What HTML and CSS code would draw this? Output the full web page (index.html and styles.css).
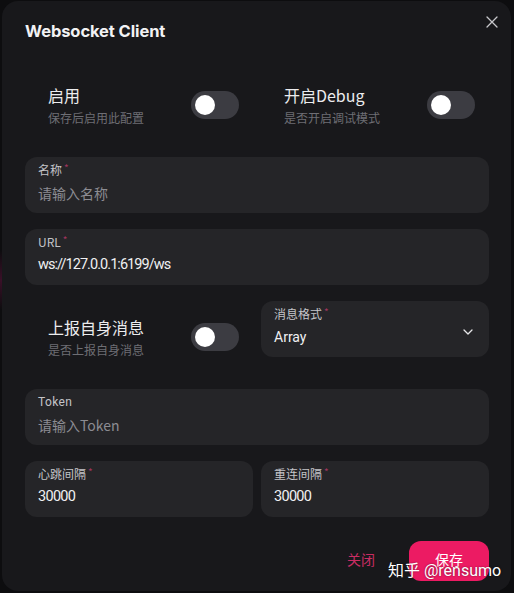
FILE: index.html
```html
<!DOCTYPE html>
<html lang="zh">
<head>
<meta charset="utf-8">
<title>Websocket Client</title>
<link rel="stylesheet" href="styles.css">
</head>
<body>
<div class="edge-glow"></div>
<div class="dialog">
  <div class="header">
    <div class="title">Websocket Client</div>
    <button class="close-x" aria-label="关闭">
      <svg width="12" height="12" viewBox="0 0 12 12"><path d="M1 1L11 11M11 1L1 11" stroke="#c8c8cc" stroke-width="1.3" stroke-linecap="round" fill="none"/></svg>
    </button>
  </div>

  <div class="form">
    <div class="switch-cell">
      <div class="switch-text">
        <div class="switch-title">启用</div>
        <div class="switch-sub">保存后启用此配置</div>
      </div>
      <div class="toggle"><span class="knob"></span></div>
    </div>
    <div class="switch-cell">
      <div class="switch-text">
        <div class="switch-title">开启Debug</div>
        <div class="switch-sub">是否开启调试模式</div>
      </div>
      <div class="toggle"><span class="knob"></span></div>
    </div>

    <div class="field span2">
      <div class="label">名称<span class="req">*</span></div>
      <div class="value placeholder">请输入名称</div>
    </div>

    <div class="field span2">
      <div class="label">URL<span class="req">*</span></div>
      <div class="value num url">ws://127.0.0.1:6199/ws</div>
    </div>

    <div class="switch-cell">
      <div class="switch-text">
        <div class="switch-title">上报自身消息</div>
        <div class="switch-sub">是否上报自身消息</div>
      </div>
      <div class="toggle"><span class="knob"></span></div>
    </div>
    <div class="field select">
      <div class="select-body">
        <div class="label">消息格式<span class="req">*</span></div>
        <div class="value">Array</div>
      </div>
      <svg class="chevron" width="10" height="6" viewBox="0 0 10 6"><path d="M1 1L5 5L9 1" stroke="#e6e6e8" stroke-width="1.3" stroke-linecap="round" stroke-linejoin="round" fill="none"/></svg>
    </div>

    <div class="field span2">
      <div class="label token-label">Token</div>
      <div class="value placeholder">请输入Token</div>
    </div>

    <div class="field">
      <div class="label">心跳间隔<span class="req">*</span></div>
      <div class="value num">30000</div>
    </div>
    <div class="field">
      <div class="label">重连间隔<span class="req">*</span></div>
      <div class="value num">30000</div>
    </div>
  </div>

  <div class="footer">
    <button class="btn-text">关闭</button>
    <button class="btn-primary">保存</button>
  </div>
</div>
<div class="watermark">知乎 @rensumo</div>
</body>
</html>
```

FILE: styles.css
```css
* { box-sizing: border-box; }

html, body {
  margin: 0;
  padding: 0;
}

body {
  background: #0d0d0f;
  width: 514px;
  height: 593px;
  overflow: hidden;
  padding: 1px 3px 0 2px;
  font-family: Roboto, "Noto Sans CJK SC", sans-serif;
  color: #e8e8ea;
  position: relative;
}

.edge-glow {
  position: absolute;
  left: 0;
  top: 250px;
  width: 2px;
  height: 60px;
  background: linear-gradient(#0d0d0f, #3a1028 50%, #0d0d0f);
}

.dialog {
  width: 509px;
  height: 590px;
  background: #18181b;
  border-radius: 16px;
  padding: 18px 22px 0 23px;
}

.header {
  display: flex;
  justify-content: space-between;
  align-items: flex-start;
}

.title {
  font-family: Inter, "Noto Sans CJK SC", sans-serif;
  font-weight: 700;
  font-size: 16.5px;
  line-height: 24px;
  color: #f2f2f4;
  letter-spacing: -0.1px;
}

.close-x {
  background: none;
  border: none;
  padding: 0;
  margin: -3px -9px 0 0;
  width: 12px;
  height: 12px;
  display: flex;
}

.form {
  margin-top: 26px;
  display: grid;
  grid-template-columns: 1fr 1fr;
  column-gap: 8px;
  row-gap: 16px;
  align-items: start;
}

.span2 { grid-column: span 2; }

.switch-cell {
  display: flex;
  align-items: center;
  justify-content: space-between;
  height: 72px;
  padding: 8px 14px 8px 23px;
}

.switch-title {
  font-family: "Noto Sans CJK SC", Roboto, sans-serif;
  font-size: 16px;
  line-height: 22px;
  color: #ececee;
}

.switch-sub {
  font-family: "Noto Sans CJK SC", sans-serif;
  font-size: 12px;
  line-height: 18px;
  margin-top: 3px;
  color: #6e6e74;
}

.toggle {
  width: 48px;
  height: 28px;
  border-radius: 14px;
  background: #3c3c42;
  padding: 4px;
  flex-shrink: 0;
}

.knob {
  display: block;
  width: 20px;
  height: 20px;
  border-radius: 50%;
  background: #ffffff;
}

.field {
  height: 56px;
  background: #252528;
  border-radius: 12px;
  padding: 5px 13px 0 13px;
}

.label {
  font-family: "Noto Sans CJK SC", sans-serif;
  font-size: 12px;
  line-height: 16px;
  color: #c4c4c8;
}

.token-label {
  font-family: Roboto, sans-serif;
  letter-spacing: 0.4px;
}

.req {
  color: #a0355f;
  font-size: 10px;
  margin-left: 2px;
  vertical-align: top;
  line-height: 12px;
}

.value {
  margin-top: 5px;
  font-family: Roboto, "Noto Sans CJK SC", sans-serif;
  font-size: 14px;
  line-height: 20px;
  color: #f0f0f2;
}

.value.num {
  letter-spacing: -0.7px;
  font-size: 14.5px;
}

.value.url {
  letter-spacing: -0.95px;
}

.placeholder {
  font-family: "Noto Sans CJK SC", Roboto, sans-serif;
  color: #8c8c92;
}

.select {
  display: flex;
  align-items: center;
  padding-right: 16px;
}

.select-body {
  flex: 1;
  align-self: flex-start;
}

.chevron { flex-shrink: 0; }

.footer {
  margin-top: 24px;
  display: flex;
  justify-content: flex-end;
  align-items: center;
  gap: 34px;
}

.btn-text {
  background: none;
  border: none;
  padding: 0;
  font-family: "Noto Sans CJK SC", sans-serif;
  font-size: 14px;
  line-height: 20px;
  color: #c92d63;
  margin-top: -4px;
}

.btn-primary {
  width: 80px;
  height: 40px;
  border: none;
  border-radius: 12px;
  background: #ec1b63;
  color: #ffffff;
  font-family: "Noto Sans CJK SC", sans-serif;
  font-size: 14px;
  padding: 0 0 4px 0;
}

.watermark {
  position: absolute;
  left: 388px;
  top: 560px;
  font-family: Roboto, "Noto Sans CJK SC", sans-serif;
  font-size: 16px;
  line-height: 22px;
  color: #ffffff;
  text-shadow: 0 0 2px rgba(0,0,0,0.5);
  white-space: nowrap;
}
```
